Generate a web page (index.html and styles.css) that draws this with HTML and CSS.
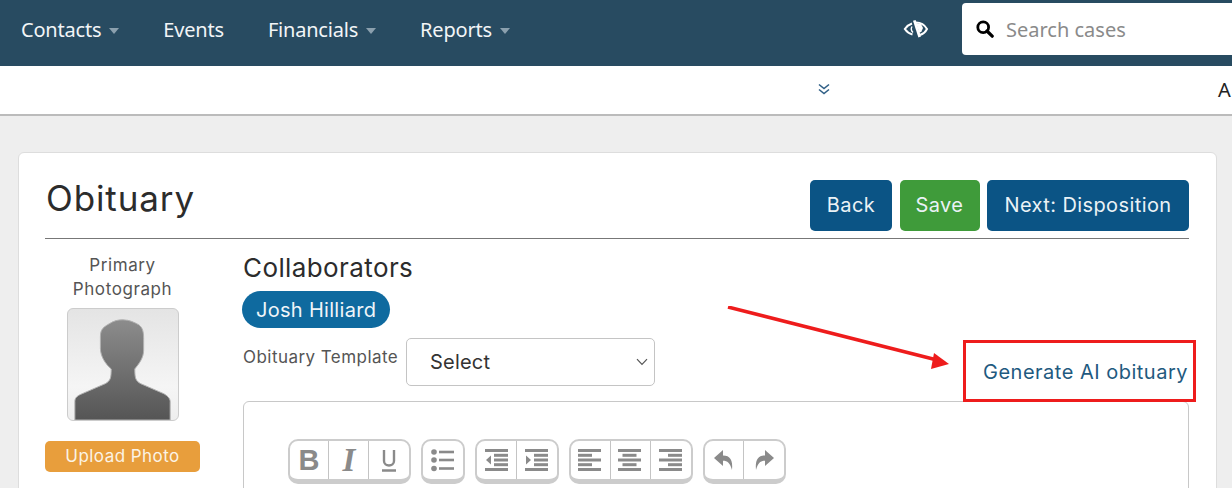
FILE: index.html
```html
<!DOCTYPE html>
<html lang="en">
<head>
<meta charset="utf-8">
<title>Obituary</title>
<link rel="stylesheet" href="styles.css">
</head>
<body>
<header class="topbar">
  <nav class="nav">
    <a class="nav-item">Contacts<i class="caret"></i></a>
    <a class="nav-item">Events</a>
    <a class="nav-item">Financials<i class="caret"></i></a>
    <a class="nav-item">Reports<i class="caret"></i></a>
  </nav>
  <svg class="eye" viewBox="0 0 26 20" width="26" height="20" aria-hidden="true">
    <path d="M9 4.500C6 5.500 3.500 7.500 1.800 10C3.500 12.500 6 14.500 9.500 15.500" fill="none" stroke="#fff" stroke-width="2"/>
    <path d="M9 7.500C7.800 9.500 8 11.500 10 13.500" fill="none" stroke="#fff" stroke-width="1.400"/>
    <path d="M13 3.500C18 3.500 22 6.500 24 10C22.500 13 20 15 17 16" fill="none" stroke="#fff" stroke-width="2"/>
    <path d="M10 1.800L12.600 1L18 17.500L15.400 18.500Z" fill="#fff"/>
    <path d="M13 4L18 5L20 9L18.500 12.500L16.500 14Z" fill="#fff"/>
  </svg>
  <div class="search">
    <svg class="search-icon" viewBox="0 0 18 18" width="18" height="18" aria-hidden="true">
      <circle cx="7.200" cy="7.200" r="5.400" fill="none" stroke="#000" stroke-width="2.800"/>
      <path d="M11 11l5.200 5.200" stroke="#000" stroke-width="3.200" stroke-linecap="round"/>
    </svg>
    <span class="search-text">Search cases</span>
  </div>
</header>
<div class="subbar">
  <svg class="chevrons" viewBox="0 0 14 14" width="14" height="14" aria-hidden="true">
    <path d="M2 2.500L7 6.500L12 2.500M2 7.500L7 11.500L12 7.500" fill="none" stroke="#2f5f86" stroke-width="1.600"/>
  </svg>
  <span class="subbar-end">A</span>
</div>
<main class="page">
  <section class="card">
    <div class="title-row">
      <h1 class="title">Obituary</h1>
      <div class="actions">
        <a class="btn btn-blue btn-back">Back</a>
        <a class="btn btn-green btn-save">Save</a>
        <a class="btn btn-blue btn-next">Next: Disposition</a>
      </div>
    </div>
    <div class="columns">
      <aside class="photo-col">
        <div class="photo-label">Primary<br>Photograph</div>
        <div class="photo">
          <svg viewBox="0 0 112 113" width="110" height="111" aria-hidden="true">
            <defs>
              <linearGradient id="sil" x1="0" y1="0" x2="0" y2="1">
                <stop offset="0" stop-color="#8c8c8c"/>
                <stop offset="1" stop-color="#555"/>
              </linearGradient>
            </defs>
            <path d="M7 113V94C7 90 10 88 15 86L38 76C43 73 44 71 44 61C38 56 33 48 33 40V28C33 20 37 18 42 15C47 12 50 11 56 11C63 11 68 14 72 16C76 19 77 23 77 30V42C77 50 72 56 68 61C68 71 69 73 74 76L97 86C101 88 104 91 104 94V113Z" fill="url(#sil)" stroke="#b0b0b0" stroke-width="1"/>
          </svg>
        </div>
        <a class="upload">Upload Photo</a>
      </aside>
      <div class="main-col">
        <h2 class="collab-title">Collaborators</h2>
        <span class="pill">Josh Hilliard</span>
        <div class="template-row">
          <label class="template-label">Obituary Template</label>
          <div class="select">
            <span>Select</span>
            <svg viewBox="0 0 12 8" width="12" height="8" aria-hidden="true"><path d="M1 1.200L6 6.400L11 1.200" fill="none" stroke="#555" stroke-width="1.200"/></svg>
          </div>
          <a class="gen-link">Generate AI obituary</a>
        </div>
        <div class="editor">
          <div class="toolbar">
            <div class="group">
              <span class="tool"><b class="glyph-b">B</b></span>
              <span class="tool"><i class="glyph-i">I</i></span>
              <span class="tool"><svg viewBox="0 0 18 24" width="18" height="24"><path d="M4 2V13C4 19 14 19 14 13V2" fill="none" stroke="#8a8a8a" stroke-width="2.400"/><path d="M2 22.500H16" stroke="#8a8a8a" stroke-width="2.400"/></svg></span>
            </div>
            <div class="group">
              <span class="tool"><svg viewBox="0 0 24 24" width="24" height="24"><g fill="#8a8a8a"><circle cx="3" cy="4" r="2.800"/><circle cx="3" cy="12" r="2.800"/><circle cx="3" cy="20.500" r="2.800"/><rect x="8" y="2.700" width="15" height="2.600"/><rect x="8" y="10.700" width="15" height="2.600"/><rect x="8" y="19.200" width="15" height="2.600"/></g></svg></span>
            </div>
            <div class="group">
              <span class="tool"><svg viewBox="0 0 24 22" width="24" height="22"><g fill="#8a8a8a"><rect width="23" height="3"/><rect x="9" y="4.800" width="14" height="3"/><rect x="9" y="9.500" width="14" height="3"/><rect x="9" y="14.200" width="14" height="3"/><rect y="19" width="23" height="3"/><path d="M6 6.500V15.500L1 11Z"/></g></svg></span>
              <span class="tool"><svg viewBox="0 0 24 22" width="24" height="22"><g fill="#8a8a8a"><rect width="23" height="3"/><rect x="9" y="4.800" width="14" height="3"/><rect x="9" y="9.500" width="14" height="3"/><rect x="9" y="14.200" width="14" height="3"/><rect y="19" width="23" height="3"/><path d="M1 6.500V15.500L6 11Z"/></g></svg></span>
            </div>
            <div class="group">
              <span class="tool"><svg viewBox="0 0 24 22" width="24" height="22"><g fill="#8a8a8a"><rect width="23" height="3"/><rect y="4.800" width="14" height="3"/><rect y="9.500" width="23" height="3"/><rect y="14.200" width="14" height="3"/><rect y="19" width="23" height="3"/></g></svg></span>
              <span class="tool"><svg viewBox="0 0 24 22" width="24" height="22"><g fill="#8a8a8a"><rect width="23" height="3"/><rect x="4.500" y="4.800" width="14" height="3"/><rect y="9.500" width="23" height="3"/><rect x="4.500" y="14.200" width="14" height="3"/><rect y="19" width="23" height="3"/></g></svg></span>
              <span class="tool"><svg viewBox="0 0 24 22" width="24" height="22"><g fill="#8a8a8a"><rect width="23" height="3"/><rect x="9" y="4.800" width="14" height="3"/><rect y="9.500" width="23" height="3"/><rect x="9" y="14.200" width="14" height="3"/><rect y="19" width="23" height="3"/></g></svg></span>
            </div>
            <div class="group">
              <span class="tool"><svg viewBox="0 0 22 24" width="22" height="24"><path d="M10 2V7.500C17 7.500 20 12 19 22C17 15 14.500 12.800 10 12.800V18L1 10Z" fill="#8a8a8a"/></svg></span>
              <span class="tool"><svg viewBox="0 0 22 24" width="22" height="24"><path d="M12 2V7.500C5 7.500 2 12 3 22C5 15 7.500 12.800 12 12.800V18L21 10Z" fill="#8a8a8a"/></svg></span>
            </div>
          </div>
        </div>
      </div>
    </div>
  </section>
</main>
<div class="callout-box"></div>
<svg class="callout-arrow" viewBox="0 0 240 80" width="240" height="80" aria-hidden="true">
  <path d="M1 1L210 54" stroke="#ee1c1c" stroke-width="3.500"/>
  <path d="M222 58L204 63L207 47Z" fill="#ee1c1c"/>
</svg>
</body>
</html>
```
FILE: styles.css
```css
* { box-sizing: border-box; }
html, body { margin: 0; height: 488px; overflow: hidden; }
body { background: #eee; font-family: "Inter", "Liberation Sans", sans-serif; color: #333; position: relative; }

.topbar { height: 66px; background: #284b61; display: flex; align-items: center; padding-left: 21px; }
.nav { display: flex; gap: 44px; font-family: "Noto Sans", sans-serif; font-size: 20px; color: #f2f5f7; margin-top: -8px; }
.nav-item { display: flex; align-items: center; letter-spacing: -0.2px; }
.caret { width: 0; height: 0; margin-left: 8px; margin-top: 3px; border-left: 5px solid transparent; border-right: 5px solid transparent; border-top: 6px solid #8ba0ae; }
.eye { margin-left: auto; margin-right: 33px; margin-top: -8px; }
.search { width: 270px; height: 52px; margin-top: -8px; background: #fff; border-radius: 4px 0 0 4px; display: flex; align-items: center; padding-left: 14px; gap: 12px; }
.search-text { font-family: "Noto Sans", sans-serif; font-size: 20px; color: #8a8a8a; }

.subbar { height: 50px; background: #fff; border-bottom: 2px solid #bbb; display: flex; align-items: center; justify-content: flex-end; padding-bottom: 2px; overflow: hidden; }
.chevrons { margin-right: 387px; }
.subbar-end { font-family: "Noto Sans", sans-serif; font-size: 20px; color: #222; width: 14px; flex: none; white-space: nowrap; }

.page { padding: 36px 15px 0 18px; }
.card { height: 400px; background: #fff; border: 1px solid #ddd; border-radius: 6px; padding: 27px 27px 0 26px; }
.title-row { display: flex; justify-content: space-between; height: 59px; border-bottom: 1px solid #777; }
.title { margin: -2px 0 0 1px; font-size: 35px; font-weight: 400; line-height: 40px; letter-spacing: 0.9px; color: #2c2c2c; }
.actions { display: flex; gap: 7.500px; height: 51px; }
.btn { display: flex; align-items: center; justify-content: center; border-radius: 5px; color: #eaf2f6; font-size: 20px; height: 51px; padding-bottom: 2px; letter-spacing: 0.4px; }
.btn-blue { background: #0b5485; }
.btn-green { background: #3f9b3a; }
.btn-back { width: 82px; }
.btn-save { width: 80px; }
.btn-next { width: 202px; }

.columns { display: flex; }
.photo-col { width: 155px; flex: none; display: flex; flex-direction: column; align-items: center; padding-top: 14px; }
.photo-label { text-align: center; font-size: 17px; line-height: 24px; letter-spacing: 0.6px; color: #555; }
.photo { width: 112px; height: 113px; margin-top: 7px; background: linear-gradient(#e4e4e4, #f5f5f5 70%, #eee); border: 1px solid #ccc; border-radius: 6px; overflow: hidden; }
.photo svg { display: block; }
.upload { width: 155px; height: 31px; margin-top: 20px; padding-bottom: 1px; background: #e89e3c; border-radius: 5px; color: #fbf3e5; display: flex; align-items: center; justify-content: center; font-size: 17px; letter-spacing: 0.45px; }

.main-col { margin-left: 43px; flex: 1; min-width: 0; padding-top: 14px; }
.collab-title { margin: 0; font-size: 26px; font-weight: 400; line-height: 30px; letter-spacing: 0.4px; color: #2c2c2c; }
.pill { display: inline-flex; align-items: center; height: 37px; margin: 8px 0 0 -1px; padding: 0 14px; background: #0f6a9f; border-radius: 19px; color: #eef5f9; font-size: 20px; letter-spacing: 0.3px; }
.template-row { display: flex; align-items: flex-start; margin-top: 10px; height: 48px; position: relative; }
.template-label { font-size: 17px; line-height: 20px; letter-spacing: 0.45px; color: #555; margin-top: 9px; width: 163px; flex: none; white-space: nowrap; }
.select { width: 249px; height: 48px; border: 1px solid #c4c4c4; border-radius: 5px; display: flex; align-items: center; justify-content: space-between; padding: 0 6px 0 23px; font-size: 20px; letter-spacing: 0.2px; color: #333; }
.gen-link { margin-left: auto; margin-right: 1px; margin-top: 22px; font-size: 20px; line-height: 24px; letter-spacing: 0.5px; color: #1f5a80; white-space: nowrap; }
.editor { margin-top: 15px; height: 120px; border: 1px solid #c8c8c8; border-radius: 6px 6px 0 0; padding: 37px 0 0 43.500px; }
.toolbar { display: flex; gap: 10px; }
.group { display: flex; border: 2px solid #ccc; border-bottom-width: 5px; border-radius: 10px; background: #fff; height: 45px; overflow: hidden; }
.tool { width: 39.900px; display: flex; align-items: center; justify-content: center; border-right: 1px solid #c4c4c4; }
.tool:last-child { border-right: 0; }
.glyph-b { font-family: "Liberation Sans", sans-serif; font-size: 29px; font-weight: 700; color: #8a8a8a; }
.glyph-i { font-family: "Liberation Serif", serif; font-size: 33px; font-weight: 700; color: #8a8a8a; }

.callout-box { position: absolute; left: 963px; top: 340px; width: 233px; height: 62px; border: 3px solid #ee1c1c; }
.callout-arrow { position: absolute; left: 727px; top: 306px; }
```
